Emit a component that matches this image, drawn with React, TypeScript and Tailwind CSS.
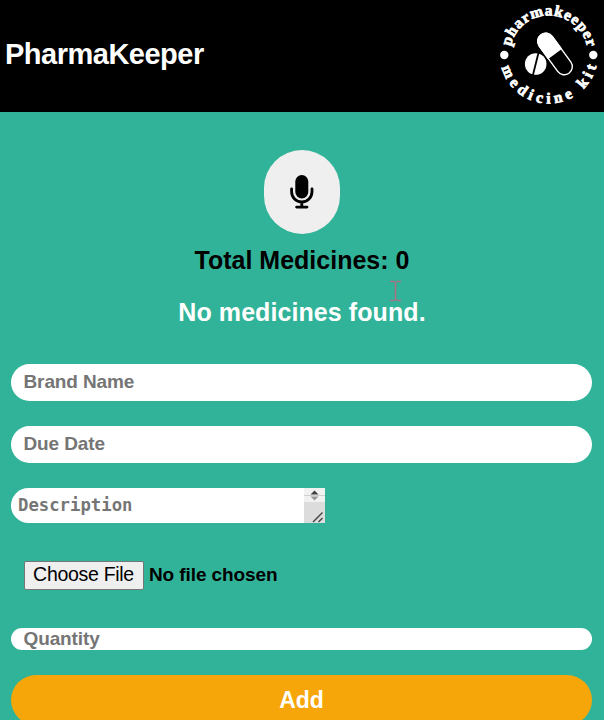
import React from "react";

function Logo() {
  return (
    <svg width="110" height="112" viewBox="0 0 110 112" className="shrink-0" fill="#fff">
      <defs>
        <path id="ringTop" d="M16.8 54.5 A39 39 0 0 1 94.8 54.5" />
        <path id="ringBottom" d="M6.8 54.5 A49 49 0 0 0 104.8 54.5" />
      </defs>
      <g fontFamily="'Liberation Serif', serif" fontWeight="700" fontSize="15.5" stroke="#fff" strokeWidth="0.75">
        <text>
          <textPath href="#ringTop" startOffset="8" textLength="107" lengthAdjust="spacing">pharmakeeper</textPath>
        </text>
        <text>
          <textPath href="#ringBottom" startOffset="13" textLength="129" lengthAdjust="spacing">medicine kit</textPath>
        </text>
      </g>
      <circle cx="11.3" cy="55" r="4.2" />
      <circle cx="100.3" cy="55" r="4.2" />
      <g transform="rotate(-36 62 54)">
        <rect x="53.9" y="30.2" width="16.2" height="47.6" rx="8.1" fill="#000" stroke="#fff" strokeWidth="1.4" />
        <path d="M53.2 54V38.4a8.8 8.8 0 0 1 17.6 0V54z" />
      </g>
      <circle cx="42.7" cy="64" r="10.8" />
      <path d="M45.6 52.5 39.8 75.5" stroke="#000" strokeWidth="1.8" />
    </svg>
  );
}

function MicIcon() {
  return (
    <svg width="24" height="34" viewBox="0 0 24 34" fill="none" stroke="#000" strokeWidth="2.8" strokeLinecap="round">
      <rect x="5.3" y="0" width="13" height="23.4" rx="6.5" fill="#000" stroke="none" />
      <path d="M1.6 13.8v3a10.2 10.2 0 0 0 20.4 0v-3M11.8 27.3v4.8M6.6 32.1h10.4" />
    </svg>
  );
}

function Field({ label, className }: { label: string; className: string }) {
  return (
    <div className={`flex items-center rounded-[20px] bg-white pl-[12.5px] text-[19px] font-bold tracking-[-0.12px] text-[#757575] ${className}`}>
      {label}
    </div>
  );
}

export default function App() {
  return (
    <div className="h-[720px] w-full overflow-hidden bg-[#31b399] font-['Liberation_Sans',Arial,sans-serif]">
      <header className="flex h-[112px] items-center justify-between bg-black pl-[5px] pr-[1px]">
        <h1 className="pb-1 text-[29px] leading-[34px] font-bold tracking-[-0.5px] text-white">PharmaKeeper</h1>
        <Logo />
      </header>
      <main className="flex flex-col pt-[38px]">
        <button className="flex h-[84px] w-[76px] items-center justify-center self-center rounded-[38px] bg-[#efefef]">
          <MicIcon />
        </button>
        <h2 className="mt-[11px] text-center text-[25px] leading-[30px] font-bold text-black">Total Medicines: 0</h2>
        <div className="relative mt-[22px]">
          <h2 className="text-center text-[25px] leading-[30px] font-bold tracking-[0.08px] text-white">No medicines found.</h2>
          <svg className="absolute -top-[17px] left-[390px]" width="11" height="22" viewBox="0 0 11 22" fill="none" stroke="#a77283" strokeWidth="1.6">
            <path d="M0 1.5h4.5M6.5 1.5H11M5.5 1.5v19M0 20.5h4.5M6.5 20.5H11" />
          </svg>
        </div>
        <form className="mt-[37px] flex flex-col pl-[11px] pr-[12px]">
          <Field label="Brand Name" className="h-[37px]" />
          <Field label="Due Date" className="mt-[25px] h-[37px]" />
          <div className="mt-[25px] flex h-[35px] w-[314px] overflow-hidden rounded-l-[17.5px] bg-white">
            <span className="flex-1 pl-[7px] font-['DejaVu_Sans_Mono',monospace] text-[17.3px] leading-[34px] font-bold text-[#757575]">
              Description
            </span>
            <svg width="21" height="35" viewBox="0 0 21 35">
              <path d="M0 0h21v35H0z" fill="#dcdcdc" />
              <path d="M0 0h21v14H0z" fill="#f1f1f1" />
              <path d="M0 7.5h21" stroke="#cfcfcf" />
              <path d="M6.5 6.5 10.5 2.5l4 4z" fill="#404040" />
              <path d="M6.5 8.5l4 4 4-4z" fill="#999" />
              <path d="M9 34 18.5 24.5M14.5 34l4-4" stroke="#404040" strokeWidth="1.4" />
            </svg>
          </div>
          <div className="mt-[38px] flex h-[29px] items-center pl-[12.5px]">
            <span className="flex h-[29px] w-[120px] items-center justify-center rounded-[2px] border border-[#767676] bg-[#efefef] pb-[2px] text-[19.5px] tracking-[-0.3px] whitespace-nowrap text-black">
              Choose File
            </span>
            <span className="ml-[5.5px] text-[19px] font-bold tracking-[-0.1px] text-black">No file chosen</span>
          </div>
          <Field label="Quantity" className="mt-[38px] h-[22px]" />
          <button className="mt-[25px] h-[50px] rounded-[25px] bg-[#f6a609] text-[23px] leading-[50px] font-bold text-white">Add</button>
        </form>
      </main>
    </div>
  );
}
